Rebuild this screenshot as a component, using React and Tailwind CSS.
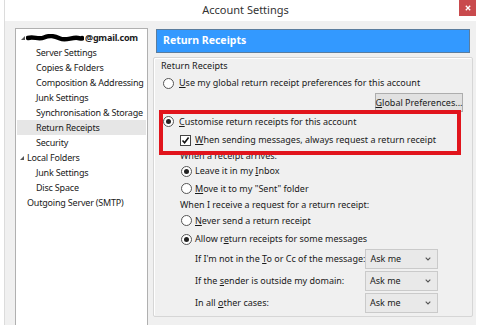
import React from 'react';

const FONT = { fontFamily: '"Noto Sans", "Open Sans", sans-serif' };

function Radio({ checked }) {
  return (
    <span className="w-[11px] h-[11px] rounded-full border border-[#555] bg-white flex items-center justify-center shrink-0">
      {checked && <span className="w-[5px] h-[5px] rounded-full bg-[#222]" />}
    </span>
  );
}

function Check() {
  return (
    <span className="w-[11px] h-[11px] border border-[#444] bg-white flex items-center justify-center shrink-0">
      <svg width="9" height="9" viewBox="0 0 9 9">
        <path d="M1.5 4.5 L3.6 6.8 L7.6 1.6" fill="none" stroke="#111" strokeWidth="1.6" />
      </svg>
    </span>
  );
}

// text with one underlined access key
function Key({ pre = '', k, post = '' }) {
  return (
    <span className="whitespace-nowrap">
      {pre}
      <span className="underline underline-offset-[1px]">{k}</span>
      {post}
    </span>
  );
}

function Select() {
  return (
    <div className="w-[73px] h-[20px] border border-[#cacaca] bg-[#e9e9e9] flex items-center justify-between pl-[4px] pr-[6px] shrink-0">
      <span>Ask me</span>
      <svg width="6" height="4" viewBox="0 0 6 4">
        <path d="M0.7 0.7 L3 3 L5.3 0.7" fill="none" stroke="#555" strokeWidth="1.1" />
      </svg>
    </div>
  );
}

const TREE = [
  { label: 'Server Settings', child: true },
  { label: 'Copies & Folders', child: true },
  { label: 'Composition & Addressing', child: true },
  { label: 'Junk Settings', child: true },
  { label: 'Synchronisation & Storage', child: true },
  { label: 'Return Receipts', child: true, active: true },
  { label: 'Security', child: true },
  { label: 'Local Folders', parent: true },
  { label: 'Junk Settings', child: true },
  { label: 'Disc Space', child: true },
  { label: 'Outgoing Server (SMTP)' },
];

function Arrow() {
  return (
    <svg width="4" height="4" viewBox="0 0 4 4" className="shrink-0">
      <path d="M4 0 L4 4 L0 4 Z" fill="#555" />
    </svg>
  );
}

export default function App() {
  return (
    <div className="w-[500px] h-[325px] bg-white overflow-hidden text-[9px] text-[#1a1a1a] pl-[4px]" style={FONT}>
      <div className="w-[472px] h-full flex flex-col border-l border-[#dcdcdc] bg-[#f0f0f0]">
        {/* Title bar */}
        <div className="h-[21px] bg-white flex items-center relative shrink-0">
          <div className="flex-1 text-center text-[11px] text-[#333] pl-[10px]">Account Settings</div>
          <div className="absolute right-[0px] top-0 w-[17px] h-[16px] bg-[#c94a4d] flex items-center justify-center">
            <svg width="6" height="6" viewBox="0 0 6 6">
              <path d="M0.8 0.8 L5.2 5.2 M5.2 0.8 L0.8 5.2" stroke="white" strokeWidth="1.3" />
            </svg>
          </div>
        </div>

        <div className="flex-1 flex pl-[10px] pt-[7px] gap-[5px] min-h-0">
          {/* Tree */}
          <div className="w-[133px] bg-white border border-[#b0b0b0] border-b-0 pt-[1px] px-[1px] overflow-hidden tracking-[-0.2px]">
            <div className="h-[15px] flex items-center gap-[1px] pl-[4px]">
              <Arrow />
              <svg width="58" height="8" viewBox="0 0 58 8" className="shrink-0">
                <path d="M2 4 C8 2, 12 6, 18 3.5 S28 2, 34 4.5 S46 3, 52 4 S56 4.5, 56 4" fill="none" stroke="#000" strokeWidth="4.5" strokeLinecap="round" />
              </svg>
              <span className="font-bold">@gmail.com</span>
            </div>
            {TREE.map((t, i) => (
              <div
                key={i}
                className={`h-[15px] flex items-center gap-[3px] ${t.child ? 'pl-[19px]' : 'pl-[10px]'} ${t.active ? 'bg-[#e6e6e6]' : ''}`}
              >
                {t.parent && <span className="-ml-[7px] flex"><Arrow /></span>}
                <span className="whitespace-nowrap">{t.label}</span>
              </div>
            ))}
          </div>

          {/* Right side */}
          <div className="w-[320px] flex flex-col">
            <div className="mx-[3px] mt-[1px] h-[24px] bg-[#3399ff] border border-[#5b7d9e] flex items-center pl-[6px] text-white font-bold text-[10.5px]">
              Return Receipts
            </div>

            <div className="relative mt-[4px] h-[260px] border border-[#d6d6d6] rounded-[2px] shadow-[inset_1px_1px_0_#fff] px-[7px] pt-[1px]">
              <div className="h-[14px] flex items-center">Return Receipts</div>

              <div className="h-[18px] flex items-center gap-[5px] pl-[2px] mt-[1px]">
                <Radio />
                <Key k="U" post="se my global return receipt preferences for this account" />
              </div>

              <div className="flex justify-end pr-[2px] mt-[1px]">
                <div className="h-[19px] w-[88px] border border-[#adadad] bg-[#e1e1e1] flex items-center justify-center">
                  <Key k="G" post="lobal Preferences..." />
                </div>
              </div>

              <div className="h-[19px] flex items-center gap-[5px] pl-[2px]">
                <Radio checked />
                <Key k="C" post="ustomise return receipts for this account" />
              </div>

              <div className="h-[18px] flex items-center gap-[4px] pl-[19px]">
                <Check />
                <Key k="W" post="hen sending messages, always request a return receipt" />
              </div>

              <div className="h-[14px] flex items-center pl-[19px]">When a receipt arrives:</div>

              <div className="h-[16px] flex items-center gap-[3px] pl-[20px]">
                <Radio checked />
                <Key pre="Leave it in my " k="I" post="nbox" />
              </div>
              <div className="h-[19px] flex items-center gap-[3px] pl-[20px]">
                <Radio />
                <Key k="M" post={'ove it to my "Sent" folder'} />
              </div>

              <div className="h-[14px] flex items-center pl-[19px]">When I receive a request for a return receipt:</div>

              <div className="h-[17px] flex items-center gap-[3px] pl-[20px]">
                <Radio />
                <Key k="N" post="ever send a return receipt" />
              </div>
              <div className="h-[20px] flex items-center gap-[3px] pl-[20px]">
                <Radio checked />
                <Key pre="Allow r" k="e" post="turn receipts for some messages" />
              </div>

              <div className="flex flex-col gap-[2px] pl-[34px] pr-[27px]">
                <div className="flex items-center justify-between">
                  <Key pre="If I'm not in the " k="T" post="o or Cc of the message:" />
                  <Select />
                </div>
                <div className="flex items-center justify-between">
                  <Key pre="If the " k="s" post="ender is outside my domain:" />
                  <Select />
                </div>
                <div className="flex items-center justify-between">
                  <Key pre="In all " k="o" post="ther cases:" />
                  <Select />
                </div>
              </div>

              {/* highlight box drawn over the dialog */}
              <div className="absolute left-[5px] top-[52px] w-[302px] h-[45px] border-[4px] border-[#e1141c] pointer-events-none" />
            </div>
          </div>
        </div>
      </div>
    </div>
  );
}
